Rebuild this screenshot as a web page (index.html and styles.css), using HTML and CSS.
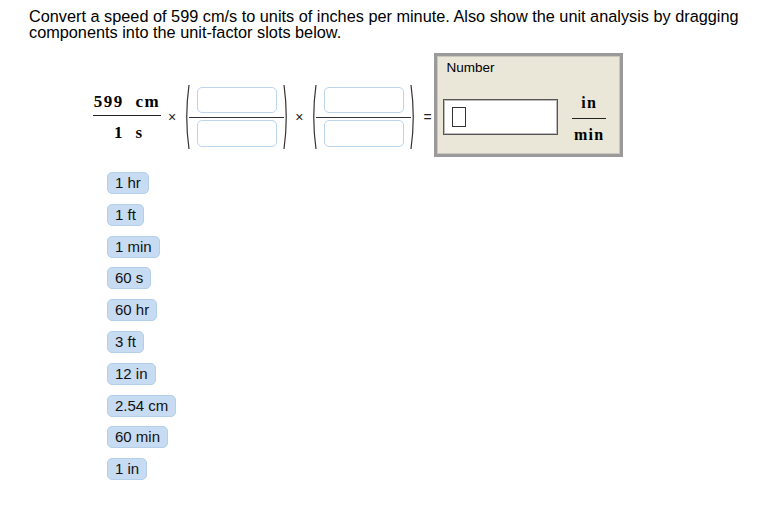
FILE: index.html
```html
<!DOCTYPE html>
<html>
<head>
<meta charset="utf-8">
<link rel="stylesheet" href="styles.css">
</head>
<body>
<div class="page">
  <p class="prompt">Convert a speed of 599 cm/s to units of inches per minute. Also show the unit analysis by dragging components into the unit-factor slots below.</p>

  <div class="equation">
    <div class="given">
      <span class="g-n1">599</span><span class="g-n2">cm</span>
      <span class="g-bar"></span>
      <span class="g-d1">1</span><span class="g-d2">s</span>
    </div>
    <span class="times">×</span>

    <div class="group">
      <svg class="paren" width="6" height="66" viewBox="0 0 6 66"><path d="M5 1 Q0.5 33 5 65" fill="none" stroke="#333" stroke-width="1.2"/></svg>
      <div class="slot-frac">
        <div class="slot"></div>
        <div class="slot-bar"></div>
        <div class="slot slot-b"></div>
      </div>
      <svg class="paren" width="6" height="66" viewBox="0 0 6 66"><path d="M1 1 Q5.5 33 1 65" fill="none" stroke="#333" stroke-width="1.2"/></svg>
    </div>
    <span class="times">×</span>

    <div class="group">
      <svg class="paren" width="6" height="66" viewBox="0 0 6 66"><path d="M5 1 Q0.5 33 5 65" fill="none" stroke="#333" stroke-width="1.2"/></svg>
      <div class="slot-frac">
        <div class="slot"></div>
        <div class="slot-bar"></div>
        <div class="slot slot-b"></div>
      </div>
      <svg class="paren" width="6" height="66" viewBox="0 0 6 66"><path d="M1 1 Q5.5 33 1 65" fill="none" stroke="#333" stroke-width="1.2"/></svg>
    </div>
    <span class="equals">=</span>

    <div class="answer">
      <div class="answer-label">Number</div>
      <div class="answer-row">
        <div class="answer-input"><span class="caret-box"></span></div>
        <div class="unit-frac">
          <span class="u-num">in</span>
          <span class="u-bar"></span>
          <span class="u-den">min</span>
        </div>
      </div>
    </div>
  </div>

  <div class="chips">
    <span class="chip">1 hr</span>
    <span class="chip">1 ft</span>
    <span class="chip">1 min</span>
    <span class="chip">60 s</span>
    <span class="chip">60 hr</span>
    <span class="chip">3 ft</span>
    <span class="chip">12 in</span>
    <span class="chip">2.54 cm</span>
    <span class="chip">60 min</span>
    <span class="chip">1 in</span>
  </div>
</div>
</body>
</html>
```

FILE: styles.css
```css
html, body {
  margin: 0;
  padding: 0;
  background: #ffffff;
}

.page {
  font-family: "Liberation Sans", Arial, sans-serif;
  color: #000;
  padding-top: 8px;
}

.prompt {
  margin: 0 0 0 29px;
  width: 735px;
  font-size: 16.3px;
  line-height: 16px;
}

.equation {
  display: flex;
  align-items: flex-start;
  margin-top: 13px;
  padding-left: 91px;
  height: 104px;
}

.given {
  display: grid;
  grid-template-columns: auto auto;
  column-gap: 13px;
  width: 72px;
  justify-content: center;
  margin-top: 40px;
  font-family: "Liberation Serif", "Times New Roman", serif;
  font-weight: bold;
  font-size: 17px;
  line-height: 18px;
  letter-spacing: 1.6px;
}

.g-n1, .g-d1 { text-align: right; margin-right: -1.6px; }
.g-n2, .g-d2 { text-align: left; }
.g-n1, .g-n2 { padding-bottom: 4px; }
.g-d1, .g-d2 { padding-top: 8px; }

.g-bar {
  grid-column: 1 / 3;
  height: 1px;
  background: #222;
  margin: 0 -1px;
}

.times {
  font-size: 14px;
  line-height: 16px;
  margin-top: 56px;
  margin-left: 5px;
  color: #222;
}

.group {
  display: flex;
  align-items: center;
  margin-top: 31px;
  margin-left: 8px;
  margin-right: 6px;
}

.group + .times { margin-left: 0; }

.paren { display: block; }

.slot-frac {
  display: flex;
  flex-direction: column;
  align-items: center;
  width: 95px;
  margin: 0 -1px;
}

.slot {
  width: 78px;
  height: 24px;
  border: 1px solid #bcd5ee;
  border-radius: 5px;
  background: #fff;
}

.slot-b { height: 25px; }

.slot-bar {
  width: 95px;
  height: 1px;
  background: #333;
  margin: 4px 0 2px;
}

.equals {
  font-size: 14px;
  line-height: 16px;
  margin-top: 56px;
  margin-left: 1px;
  color: #222;
}

.answer {
  margin-left: 2px;
  width: 183px;
  height: 98px;
  border: 3px solid #9a9a9a;
  box-shadow: inset 0 0 0 1px #c9c6bb;
  background: #ebe7d8;
}

.answer-label {
  font-size: 13.5px;
  line-height: 15px;
  padding: 4px 0 0 10px;
}

.answer-row {
  display: flex;
  align-items: flex-start;
  margin-top: 24px;
  padding-left: 6px;
}

.answer-input {
  box-sizing: border-box;
  width: 115px;
  height: 36px;
  border: 1px solid #555;
  box-shadow: inset 0 0 0 1px #bbb;
  background: #fff;
  display: flex;
  align-items: center;
  padding-left: 8px;
}

.caret-box {
  box-sizing: border-box;
  width: 14px;
  height: 20px;
  border: 1px solid #333;
}

.unit-frac {
  display: flex;
  flex-direction: column;
  align-items: center;
  width: 34px;
  margin-left: 14px;
  margin-top: -5px;
  font-family: "Liberation Serif", "Times New Roman", serif;
  font-weight: bold;
  font-size: 16px;
  line-height: 18px;
  letter-spacing: 1.3px;
}

.u-num { padding-bottom: 6px; margin-right: -1.3px; }
.u-den { padding-top: 7px; margin-right: -1.3px; }

.u-bar {
  width: 34px;
  height: 1px;
  background: #222;
}

.chips {
  display: flex;
  flex-direction: column;
  align-items: flex-start;
  gap: 9.8px;
  margin-top: 15px;
  padding-left: 107px;
}

.chip {
  box-sizing: border-box;
  height: 22px;
  line-height: 20px;
  padding: 0 7px;
  font-size: 15px;
  background: #c7dcf2;
  border: 1px solid #b3cfea;
  border-radius: 5px;
  color: #111;
}
```
